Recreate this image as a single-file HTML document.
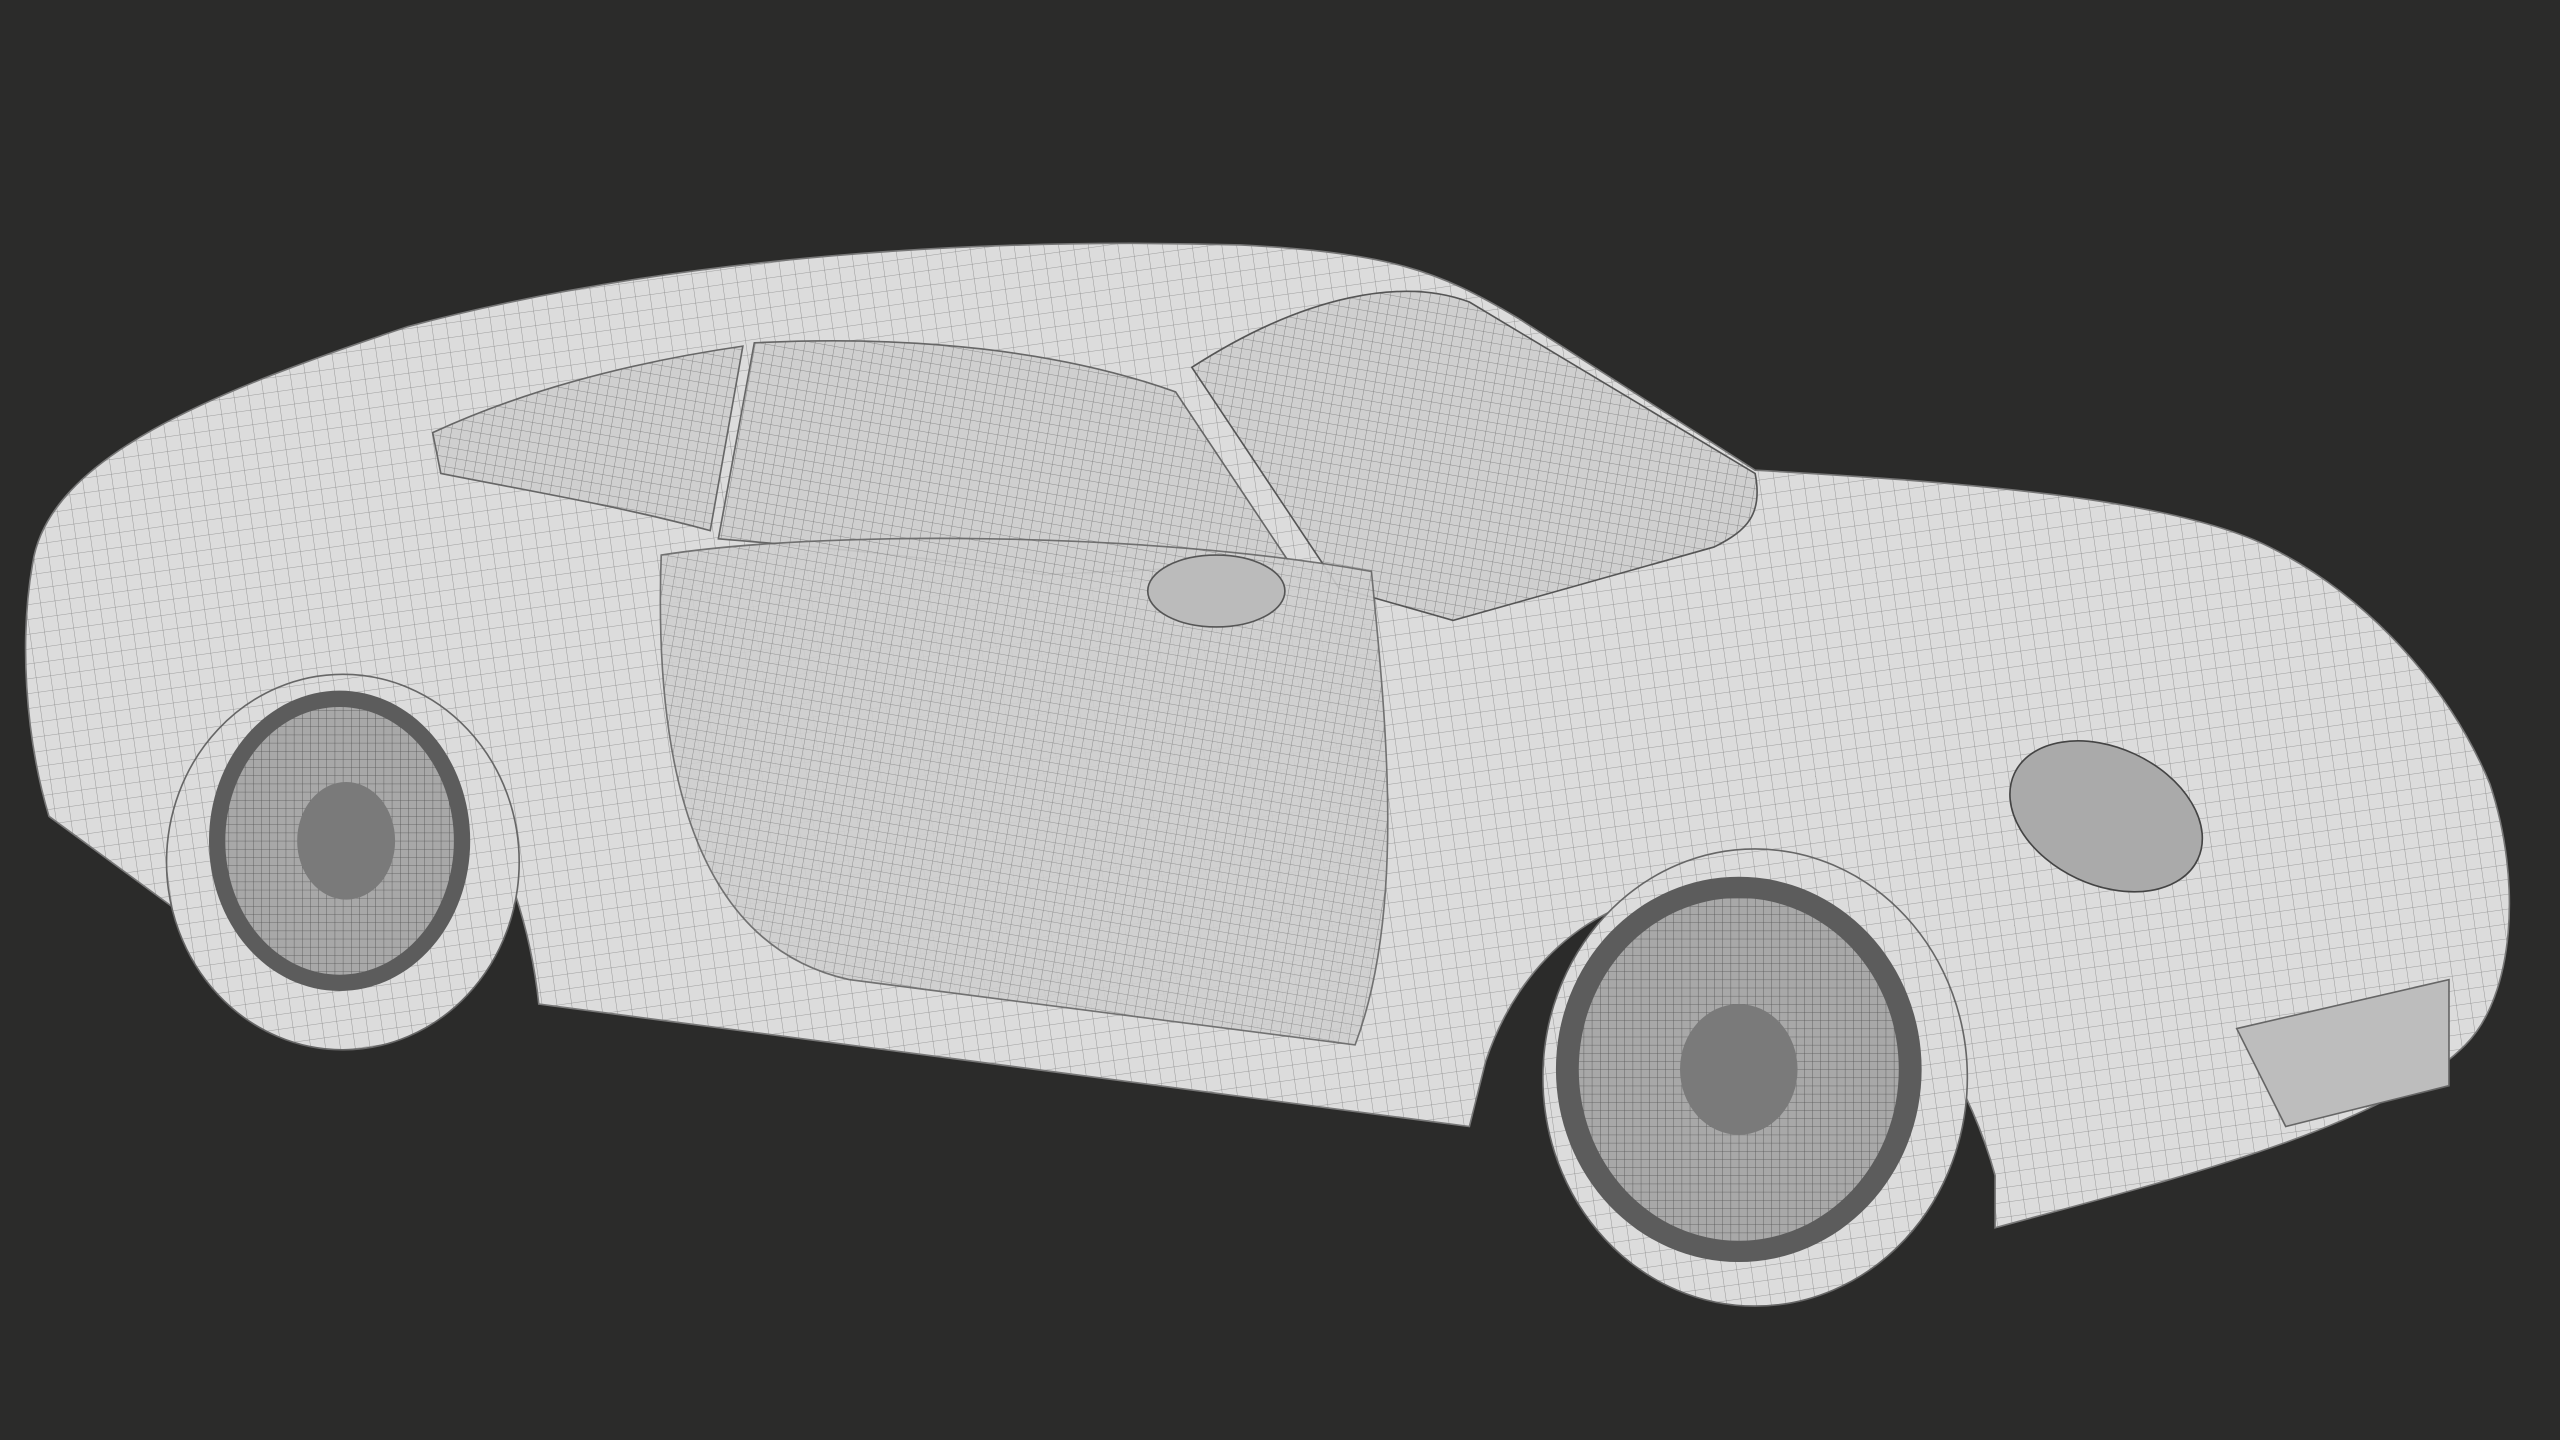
<!DOCTYPE html>
<html><head><meta charset="utf-8"><style>
html,body{margin:0;padding:0;background:#2b2b2a;width:2560px;height:1440px;overflow:hidden}
svg{display:block}
</style></head><body>
<svg width="2560" height="1440" viewBox="0 0 1568 882" xmlns="http://www.w3.org/2000/svg">
<defs>
<pattern id="g" width="9" height="9" patternUnits="userSpaceOnUse" patternTransform="rotate(-8)">
<rect width="9" height="9" fill="#dcdcdc"/>
<path d="M0 0H9M0 0V9" stroke="#8a8a8a" stroke-width="0.5"/>
</pattern>
<pattern id="g2" width="6" height="6" patternUnits="userSpaceOnUse" patternTransform="rotate(10)">
<rect width="6" height="6" fill="#cfcfcf"/>
<path d="M0 0H6M0 0V6" stroke="#7a7a7a" stroke-width="0.5"/>
</pattern>
<pattern id="w" width="5" height="5" patternUnits="userSpaceOnUse">
<rect width="5" height="5" fill="#a8a8a8"/>
<path d="M0 0H5M0 0V5" stroke="#555" stroke-width="0.5"/>
</pattern>
</defs>
<rect width="1568" height="882" fill="#2b2b2a"/>
<!-- body -->
<path d="M20,345 C30,280 130,240 250,200 C400,160 580,145 760,150 C850,155 880,165 930,195 L1075,288 C1200,295 1330,305 1390,335 C1450,365 1500,420 1525,480 C1545,540 1540,610 1510,640 C1460,690 1340,720 1222,752 L1222,720 C1200,640 1140,560 1060,545 C980,540 930,590 910,650 L900,690 L330,615 C320,520 270,440 210,430 C140,430 110,490 105,555 L30,500 C15,450 12,390 20,345 Z" fill="url(#g)" stroke="#777" stroke-width="1"/>
<!-- windows -->
<path d="M265,265 C330,235 400,220 455,212 L435,325 C380,310 320,300 270,290 Z" fill="url(#g2)" stroke="#666"/>
<path d="M462,210 C560,205 650,215 720,240 L790,345 L640,352 C560,340 500,335 440,330 Z" fill="url(#g2)" stroke="#666"/>
<path d="M730,225 C800,180 860,170 900,185 L1075,290 C1080,315 1070,325 1050,335 L890,380 L820,360 Z" fill="url(#g2)" stroke="#555"/>
<!-- door -->
<path d="M405,340 C500,325 700,325 840,350 C850,450 860,560 830,640 L520,600 C430,580 400,480 405,340 Z" fill="url(#g2)" stroke="#666" opacity="0.9"/>
<!-- mirror -->
<ellipse cx="745" cy="362" rx="42" ry="22" fill="#bbb" stroke="#555"/>
<!-- headlight -->
<ellipse cx="1290" cy="500" rx="62" ry="42" transform="rotate(25 1290 500)" fill="#aaa" stroke="#444"/>
<!-- front grille -->
<path d="M1370,630 L1500,600 L1500,665 L1400,690 Z" fill="#bdbdbd" stroke="#666"/>
<!-- rear wheel -->
<ellipse cx="210" cy="528" rx="108" ry="115" fill="url(#g)" stroke="#666"/>
<ellipse cx="208" cy="515" rx="80" ry="92" fill="#5c5c5c"/>
<ellipse cx="208" cy="515" rx="70" ry="82" fill="url(#w)"/>
<ellipse cx="212" cy="515" rx="30" ry="36" fill="#7a7a7a"/>
<!-- front wheel -->
<ellipse cx="1075" cy="660" rx="130" ry="140" fill="url(#g)" stroke="#666"/>
<ellipse cx="1065" cy="655" rx="112" ry="118" fill="#5c5c5c"/>
<ellipse cx="1065" cy="655" rx="98" ry="105" fill="url(#w)"/>
<ellipse cx="1065" cy="655" rx="36" ry="40" fill="#7a7a7a"/>
</svg>
</body></html>
